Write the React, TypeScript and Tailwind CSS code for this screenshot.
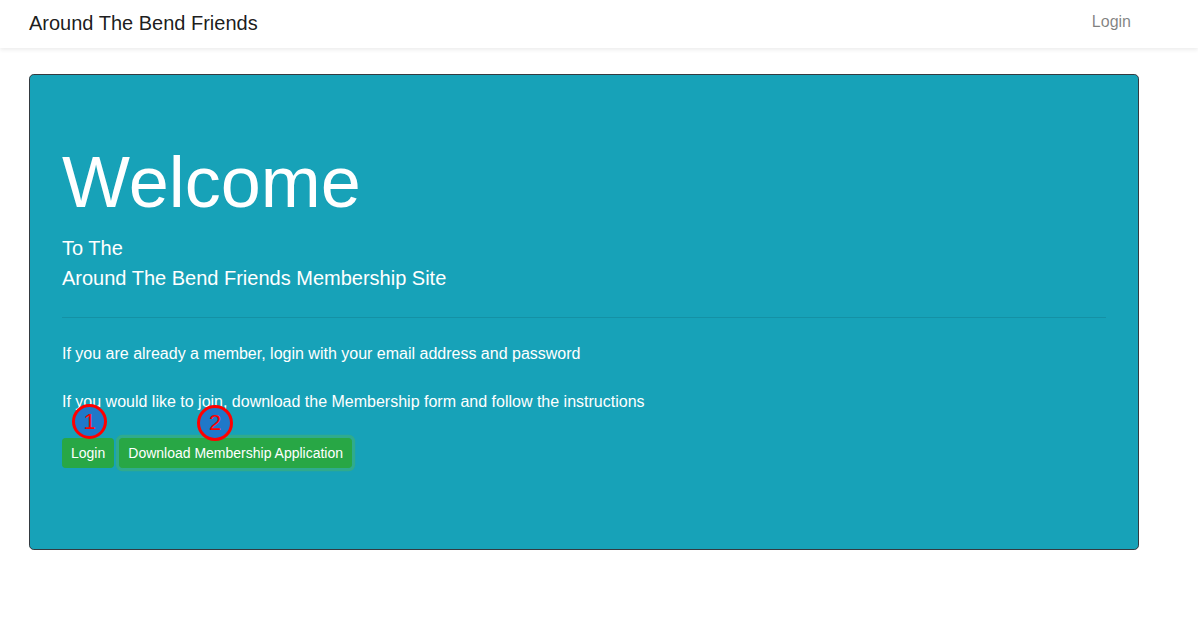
import React from "react";

export default function App() {
  return (
    <div
      className="min-h-[635px] bg-white text-[#212529]"
      style={{ fontFamily: '"Liberation Sans", Arial, sans-serif' }}
    >
      <nav className="h-[48px] bg-white shadow-[0_2px_4px_rgba(0,0,0,0.075)] relative z-10">
        <div className="ml-[29px] w-[1110px] h-[45px] flex items-center justify-between">
          <a className="text-[20px] leading-[30px] text-[rgba(0,0,0,0.9)]">
            Around The Bend Friends
          </a>
          <a className="text-[16px] leading-[24px] pr-2 pb-[1px] text-[rgba(0,0,0,0.5)]">
            Login
          </a>
        </div>
      </nav>

      <div className="pt-[26px] ml-[29px] w-[1110px]">
        <div className="bg-[#17a2b8] border border-[#343a40] rounded-[4.8px] px-8 pt-16 pb-[64px] text-white">
          <h1 className="text-[72px] leading-[1.2] font-light mb-2">Welcome</h1>
          <p className="text-[20px] leading-[30px] font-light">
            To The
            <br />
            Around The Bend Friends Membership Site
          </p>
          <hr className="mt-6 mb-6 border-0 border-t border-[rgba(0,0,0,0.1)]" />
          <p className="text-[16px] leading-[24px] mb-[24px]">
            If you are already a member, login with your email address and password
          </p>
          <p className="text-[16px] leading-[24px]">
            If you would like to join, download the Membership form and follow the
            instructions
          </p>
          <div className="relative mt-[24px] mb-[17px] flex gap-[5px]">
            <button className="h-[30px] px-2 text-[14px] leading-[21px] text-white bg-[#28a745] border border-[#28a745] rounded-[3.2px]">
              Login
            </button>
            <button className="h-[30px] px-2 text-[14px] leading-[21px] text-white bg-[#28a745] border border-[#28a745] rounded-[3.2px] shadow-[0_0_0_3.2px_rgba(72,180,97,0.5)]">
              Download Membership Application
            </button>
            <div className="absolute left-[10px] top-[-34px] w-[35px] h-[35px] rounded-full border-[3px] border-[#ff0000] bg-[#1f78c9] flex items-center justify-center text-[#ff0000] text-[22px] leading-none">
              1
            </div>
            <div className="absolute left-[135px] top-[-33px] w-[36px] h-[36px] rounded-full border-[3px] border-[#ff0000] bg-[#1f78c9] flex items-center justify-center text-[#ff0000] text-[22px] leading-none">
              2
            </div>
          </div>
        </div>
      </div>
    </div>
  );
}
